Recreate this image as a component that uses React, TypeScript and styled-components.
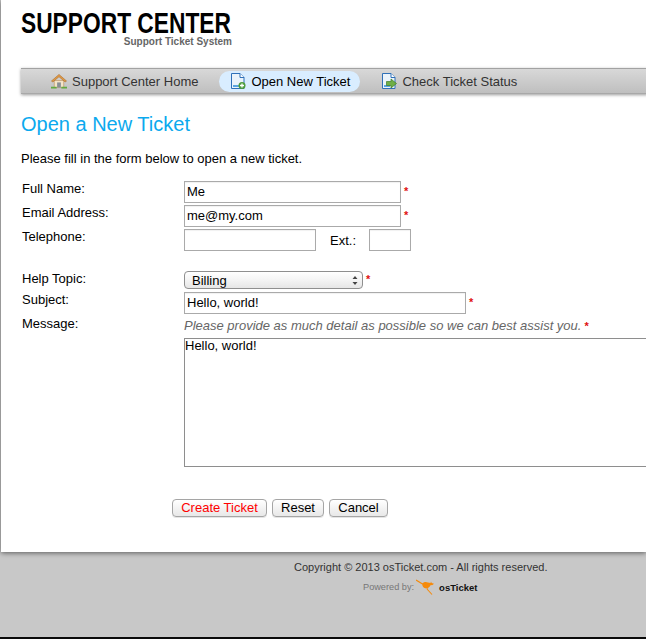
import * as React from 'react'
import styled, { createGlobalStyle } from 'styled-components'

const Global = createGlobalStyle`
html, body {
  margin: 0;
  padding: 0;
  background: #c8c8c8;
  overflow: hidden;
}
* { box-sizing: border-box; }
`

const Page = styled.div`
width: 646px;
height: 639px;
overflow: hidden;
display: flex;
flex-direction: column;
font-family: "Liberation Sans", Arial, sans-serif;
font-size: 13px;
color: #000;
border-bottom: 2px solid #0a0a0a;
`

const Container = styled.div`
height: 552px;
margin-left: 1px;
background: #fff;
padding: 0 0 0 20px;
box-shadow: 0 1px 5px rgba(0, 0, 0, 0.55);
position: relative;
`

const Logo = styled.div`
height: 68px;
width: 211px;
padding-top: 9px;
`

const LogoTitle = styled.div`
font-weight: bold;
font-size: 29px;
line-height: 28px;
white-space: nowrap;
color: #000;
width: 268px;
transform: scaleX(0.785);
transform-origin: left center;
`

const LogoSub = styled.div`
font-weight: bold;
font-size: 10px;
line-height: 10px;
color: #666;
text-align: right;
`

const Nav = styled.nav`
height: 26px;
display: flex;
align-items: center;
padding-left: 28px;
border-top: 1px solid #a2a2a2;
border-bottom: 1px solid #a8a8a8;
background: linear-gradient(#d8d8d8, #bfbfbf);
box-shadow: 0 1px 3px rgba(0, 0, 0, 0.4);
margin-right: -2px;
`

const NavItem = styled.a<{ $active?: boolean }>`
display: flex;
align-items: center;
gap: 5px;
height: 21px;
padding: ${p => (p.$active ? '0 10px 0 11px' : '0 2px')};
margin-right: 19px;
border-radius: 11px;
background: ${p => (p.$active ? '#d9edff' : 'transparent')};
color: ${p => (p.$active ? '#000' : '#333')};
font-size: 13px;
white-space: nowrap;
`

const Heading = styled.h1`
margin: 17px 0 0;
font-weight: normal;
font-size: 20px;
line-height: 26px;
color: #0ba9ee;
`

const Intro = styled.p`
margin: 14px 0 0;
line-height: 16px;
font-size: 13px;
`

const Form = styled.form`
margin-top: 14px;
display: flex;
flex-direction: column;
`

const Row = styled.div<{ $top?: number }>`
display: grid;
grid-template-columns: 163px 1fr;
margin-top: ${p => p.$top ?? 2}px;
`

const Label = styled.label`
padding: 0 0 0 1px;
line-height: 15px;
`

const Field = styled.div`
display: flex;
align-items: center;
min-width: 0;
`

const Input = styled.input<{ $w: number }>`
width: ${p => p.$w}px;
height: 22px;
border: 1px solid #aaa;
box-shadow: inset 0 1px 1px rgba(0, 0, 0, 0.06);
padding: 0 2px 1px;
font-family: inherit;
font-size: 13px;
color: #000;
outline: none;
background: #fff;
`

const Required = styled.span<{ $low?: boolean }>`
color: #e01010;
font-size: 11px;
font-weight: bold;
line-height: 14px;
margin: ${p => (p.$low ? '2px' : '-2px')} 0 0 3px;
`

const Ext = styled.span`
margin: 0 13px 0 14px;
`

const SelectWrap = styled.div`
position: relative;
width: 179px;
height: 18px;
`

const Select = styled.select`
appearance: none;
width: 100%;
height: 100%;
border: 1px solid #8f8f8f;
border-radius: 4px;
padding: 0 0 0 7px;
font-family: inherit;
font-size: 13px;
color: #000;
background: linear-gradient(#fff, #f4f4f4 50%, #e6e6e6);
outline: none;
`

const Arrows = styled.svg`
position: absolute;
right: 5px;
top: 5px;
`

const Hint = styled.div`
margin-top: 2px;
font-style: italic;
color: #666;
line-height: 15px;
white-space: nowrap;
`

const MessageBox = styled.textarea`
display: block;
margin: 5px 0 0 163px;
width: 480px;
height: 129px;
border: 1px solid #8e8e8e;
padding: 0;
font-family: inherit;
font-size: 13px;
line-height: 13px;
color: #000;
outline: none;
resize: none;
`

const Buttons = styled.div`
display: flex;
margin: 32px 0 0 151px;
gap: 5px;
`

const Button = styled.button<{ $w: number; $primary?: boolean }>`
width: ${p => p.$w}px;
height: 18px;
padding: 0;
border: 1px solid #a5a5a5;
border-radius: 4px;
background: linear-gradient(#fff, #f3f3f3 50%, #e8e8e8);
box-shadow: 0 1px 0 rgba(0, 0, 0, 0.1);
font-family: inherit;
font-size: 13px;
line-height: 16px;
color: ${p => (p.$primary ? '#f00' : '#000')};
`

const Footer = styled.footer`
flex: 1;
padding: 8px 0 0 294px;
color: #333;
font-size: 11px;
`

const Copyright = styled.div`
line-height: 15px;
white-space: nowrap;
`

const Powered = styled.div`
display: flex;
align-items: center;
margin: 2px 0 0 69px;
height: 20px;
font-size: 9.2px;
color: #777;
`

const PoweredName = styled.span`
margin-left: 3px;
color: #111;
font-size: 9.5px;
font-weight: bold;
`

const PoweredMark = styled.svg`
margin-left: 2px;
`

const DocBase = () => (
  <>
    <path d="M1.500 .5h8.500l4 4v11h-12.500z" fill="#eaf3fb" stroke="#2f70b8" />
    <path d="M10 .5v4h4" fill="#fff" stroke="#2f70b8" />
    <path d="M3 12h6v2h-6z" fill="#5aa5e0" />
  </>
)

const HomeIcon = () => (
  <svg width="16" height="16" viewBox="0 0 17 16">
    <path d="M3.500 7.500h10v7.500h-10z" fill="#f3e4c8" stroke="#b98a50" strokeWidth=".6" />
    <path d="M.5 8l8-7 8 7-1.500 1-6.500-5.500-6.500 5.500z" fill="#e09a45" stroke="#a96a25" strokeWidth=".6" />
    <path d="M6.500 9.500h4v5.500h-4z" fill="#8a8f95" />
    <path d="M0 14h6v2h-6zM11 14h6v2h-6z" fill="#62a83e" />
  </svg>
)

const NewDocIcon = () => (
  <svg width="16" height="16" viewBox="0 0 16 16">
    <DocBase />
    <circle cx="12" cy="12.500" r="3.500" fill="#4e9d3c" />
    <path d="M10 12.500h4M12 10.500v4" stroke="#fff" strokeWidth="1.300" />
  </svg>
)

const StatusDocIcon = () => (
  <svg width="16" height="16" viewBox="0 0 16 16">
    <DocBase />
    <path d="M5.500 8.500h4.500v-2.500l5.500 4.500-5.500 4.500v-2.500h-4.500z" fill="#6fae45" stroke="#3f7d2a" strokeWidth=".7" />
  </svg>
)

const Kangaroo = () => (
  <PoweredMark width="20" height="16" viewBox="0 0 20 16">
    <path d="M0 1l6.500 4" stroke="#f58a0b" strokeWidth="1.200" fill="none" />
    <path
      d="M6 4.500c1.500-1.500 4-2 6-1l2.500 .5 .5-1.500 .7 1.500 2.300 .8-1.500 1.200-2 .3c-.5 1.200-1.200 2-2.200 2.500l-.5 1-2.500-.5c-2-.5-3-2-3.300-4.800z"
      fill="#f58a0b"
    />
    <path d="M11 10l5 5.500" stroke="#f58a0b" strokeWidth="1.100" fill="none" />
  </PoweredMark>
)

const App = () => (
  <Page>
    <Global />
    <Container>
      <Logo>
        <LogoTitle>SUPPORT CENTER</LogoTitle>
        <LogoSub>Support Ticket System</LogoSub>
      </Logo>
      <Nav>
        <NavItem><HomeIcon />Support Center Home</NavItem>
        <NavItem $active><NewDocIcon />Open New Ticket</NavItem>
        <NavItem><StatusDocIcon />Check Ticket Status</NavItem>
      </Nav>
      <Heading>Open a New Ticket</Heading>
      <Intro>Please fill in the form below to open a new ticket.</Intro>
      <Form onSubmit={e => e.preventDefault()}>
        <Row $top={0}>
          <Label>Full Name:</Label>
          <Field><Input $w={217} defaultValue="Me" /><Required>*</Required></Field>
        </Row>
        <Row>
          <Label>Email Address:</Label>
          <Field><Input $w={217} defaultValue="me@my.com" /><Required>*</Required></Field>
        </Row>
        <Row>
          <Label>Telephone:</Label>
          <Field>
            <Input $w={132} />
            <Ext>Ext.:</Ext>
            <Input $w={42} />
          </Field>
        </Row>
        <Row $top={20}>
          <Label>Help Topic:</Label>
          <Field>
            <SelectWrap>
              <Select defaultValue="Billing"><option>Billing</option></Select>
              <Arrows width="6" height="9" viewBox="0 0 6 9">
                <path d="M3 0l2.500 3h-5zM3 9l2.500-3h-5z" fill="#444" />
              </Arrows>
            </SelectWrap>
            <Required>*</Required>
          </Field>
        </Row>
        <Row $top={3}>
          <Label>Subject:</Label>
          <Field><Input $w={282} defaultValue="Hello, world!" /><Required>*</Required></Field>
        </Row>
        <Row>
          <Label>Message:</Label>
          <Field>
            <Hint>Please provide as much detail as possible so we can best assist you.</Hint>
            <Required $low>*</Required>
          </Field>
        </Row>
        <MessageBox defaultValue="Hello, world!" />
        <Buttons>
          <Button $w={95} $primary>Create Ticket</Button>
          <Button $w={52}>Reset</Button>
          <Button $w={59}>Cancel</Button>
        </Buttons>
      </Form>
    </Container>
    <Footer>
      <Copyright>Copyright © 2013 osTicket.com - All rights reserved.</Copyright>
      <Powered>Powered by:<Kangaroo /><PoweredName>osTicket</PoweredName></Powered>
    </Footer>
  </Page>
)

export default App
